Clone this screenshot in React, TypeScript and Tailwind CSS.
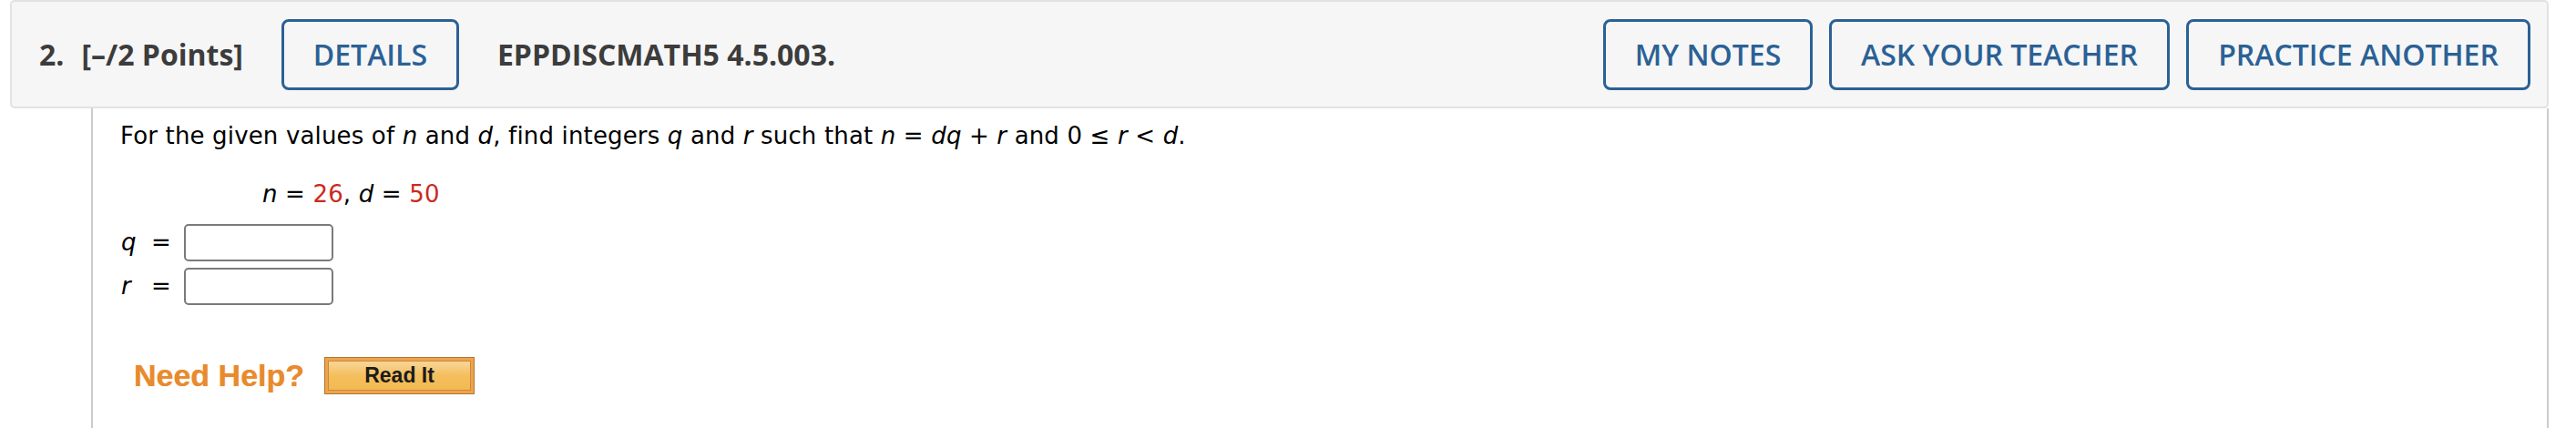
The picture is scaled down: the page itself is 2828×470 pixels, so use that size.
const header = "font-['Open_Sans',sans-serif]";
const body = "font-['DejaVu_Sans',sans-serif]";

const TopButton = ({ label, width }: { label: string; width: string }) => (
  <button
    type="button"
    className={`${width} h-[78px] shrink-0 rounded-[8px] border-[3px] border-[#2b6195] bg-[#f6f6f6] text-[32px] font-semibold text-[#2b6195] flex items-center justify-center`}
  >
    {label}
  </button>
);

const AnswerRow = ({ name }: { name: string }) => (
  <div className="flex items-center h-[41px]">
    <span className="w-[34px] pl-[1px] italic text-[26px] text-black">{name}</span>
    <span className="w-[36px] text-[26px] text-black">=</span>
    <input
      type="text"
      className="w-[164px] h-[41px] rounded-[5px] border-2 border-[#7a7a7a] bg-white"
    />
  </div>
);

export default function App() {
  return (
    <div className="w-[2828px] h-[470px] bg-white overflow-hidden">
      <div className="ml-[11px] w-[2787px]">
        <div className={`${header} h-[119px] flex items-center rounded-[5px] border-2 border-[#e2e2e2] bg-[#f6f6f6] pl-[30px] pr-[18px]`}>
          <span className="text-[32px] font-bold text-[#3c3c3c]">2.</span>
          <span className="ml-[19px] text-[32px] font-bold text-[#3c3c3c]">[–/2 Points]</span>
          <div className="ml-[42px]">
            <TopButton label="DETAILS" width="w-[195px]" />
          </div>
          <span className="ml-[42px] text-[32px] font-bold text-[#3c3c3c]">EPPDISCMATH5 4.5.003.</span>
          <div className="ml-auto flex gap-[18px]">
            <TopButton label="MY NOTES" width="w-[230px]" />
            <TopButton label="ASK YOUR TEACHER" width="w-[374px]" />
            <TopButton label="PRACTICE ANOTHER" width="w-[378px]" />
          </div>
        </div>

        <div className={`${body} ml-[89px] w-[2698px] h-[360px] border-x-2 border-[#cccccc] bg-white pl-[30px] pt-[15px]`}>
          <p className="text-[26px] leading-[30px] tracking-[0.16px] text-black">
            For the given values of <i>n</i> and <i>d</i>, find integers <i>q</i> and <i>r</i> such that{" "}
            <i>n</i> = <i>dq</i> + <i>r</i> and 0 ≤ <i>r</i> &lt; <i>d</i>.
          </p>
          <p className="mt-[34px] ml-[156px] text-[26px] leading-[30px] tracking-[0.16px] text-black">
            <i>n</i> = <span className="text-[#cc2a1e]">26</span>, <i>d</i> ={" "}
            <span className="text-[#cc2a1e]">50</span>
          </p>

          <div className="mt-[18px] flex flex-col gap-[7px]">
            <AnswerRow name="q" />
            <AnswerRow name="r" />
          </div>

          <div className="mt-[52px] ml-[15px] flex items-center">
            <span className="font-['Liberation_Sans',Arial,sans-serif] text-[34px] font-bold text-[#e88a2d] [text-shadow:0_0_1px_#f2b57a]">
              Need Help?
            </span>
            <button
              type="button"
              className="ml-[22px] w-[165px] h-[41px] border border-[#b07632] bg-[#f0a24b] p-[3px]"
            >
              <span className="flex h-full w-full items-center justify-center border border-[#c78b3e] bg-gradient-to-b from-[#f8d596] via-[#f4bf5c] to-[#f2b953] font-['Liberation_Sans',Arial,sans-serif] text-[23px] font-bold text-[#1b1b1b]">
                Read It
              </span>
            </button>
          </div>
        </div>
      </div>
    </div>
  );
}
